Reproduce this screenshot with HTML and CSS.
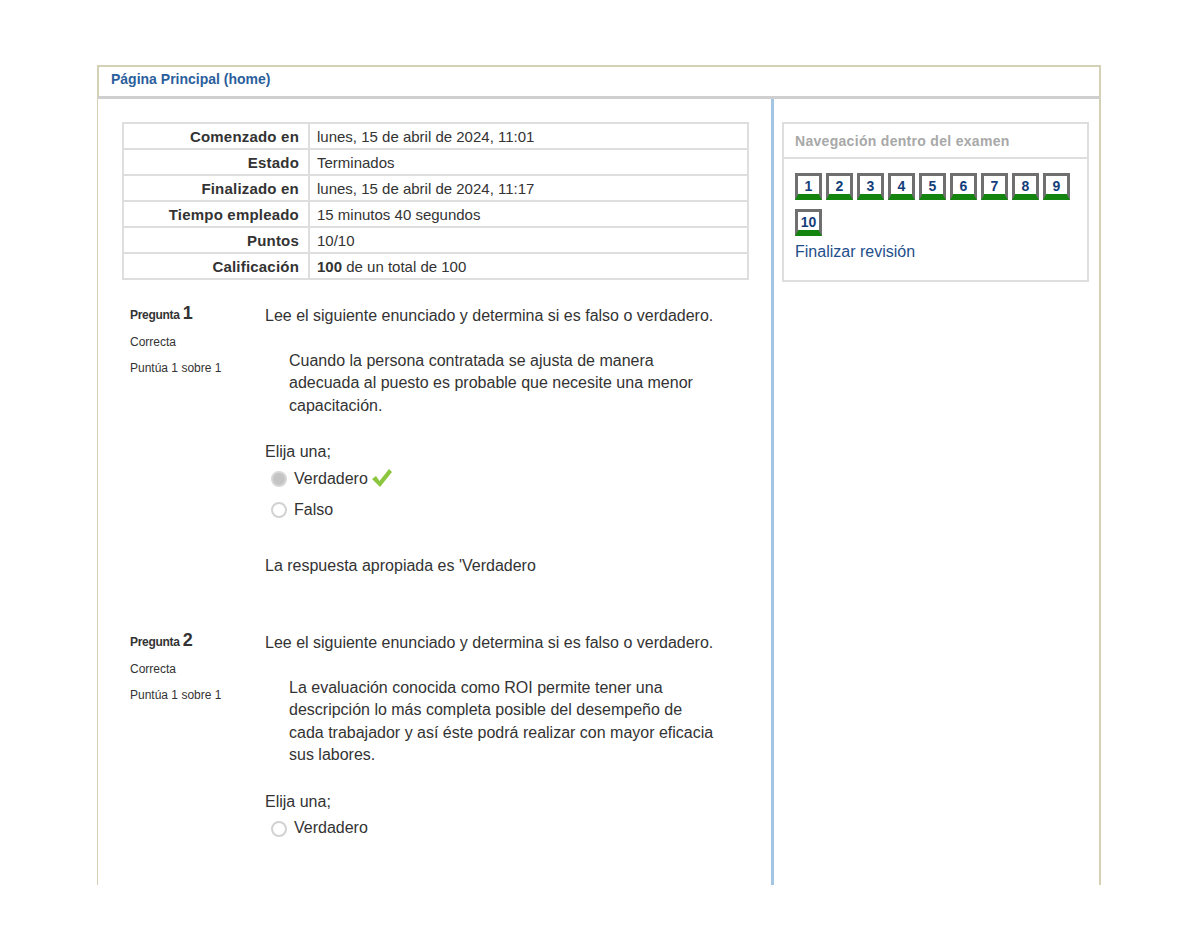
FILE: index.html
```
<html>

<head>
  <link rel="stylesheet" href="styles.css">
</head>

<body>

  <div class="page">
    <div class="navbar">
      <a class="home-link">Página Principal (home)</a>
    </div>

    <div class="main">
      <div class="region-main">

        <table class="summary">
          <tr>
            <th>Comenzado en</th>
            <td>lunes, 15 de abril de 2024, 11:01</td>
          </tr>
          <tr>
            <th>Estado</th>
            <td>Terminados</td>
          </tr>
          <tr>
            <th>Finalizado en</th>
            <td>lunes, 15 de abril de 2024, 11:17</td>
          </tr>
          <tr>
            <th>Tiempo empleado</th>
            <td>15 minutos 40 segundos</td>
          </tr>
          <tr>
            <th>Puntos</th>
            <td>10/10</td>
          </tr>
          <tr>
            <th>Calificación</th>
            <td><b>100</b> de un total de 100</td>
          </tr>
        </table>

        <!-- pregunta 1 -->
        <div class="que">
          <div class="info">
            <p class="qno">Pregunta <span>1</span></p>
            <p class="state">Correcta</p>
            <p class="grade">Puntúa 1 sobre 1</p>
          </div>
          <div class="content">
            <p class="qtext">Lee el siguiente enunciado y determina si es falso o verdadero.</p>
            <p class="statement">Cuando la persona contratada se ajusta de manera adecuada al puesto es probable que necesite una menor capacitación.</p>
            <p class="prompt">Elija una;</p>
            <div class="answer">
              <div class="option">
                <span class="radio checked"></span>
                <span>Verdadero</span>
                <svg class="tick" width="22" height="20" viewBox="0 0 22 20">
                  <path d="M1 11 L5 8 L8.5 13 L18 1 L21 4 L9 19 Z" fill="#8cc63f"/>
                </svg>
              </div>
              <div class="option">
                <span class="radio"></span>
                <span>Falso</span>
              </div>
            </div>
            <p class="feedback">La respuesta apropiada es 'Verdadero</p>
          </div>
        </div>

        <!-- pregunta 2 -->
        <div class="que">
          <div class="info">
            <p class="qno">Pregunta <span>2</span></p>
            <p class="state">Correcta</p>
            <p class="grade">Puntúa 1 sobre 1</p>
          </div>
          <div class="content">
            <p class="qtext">Lee el siguiente enunciado y determina si es falso o verdadero.</p>
            <p class="statement">La evaluación conocida como ROI permite tener una descripción lo más completa posible del desempeño de cada trabajador y así éste podrá realizar con mayor eficacia sus labores.</p>
            <p class="prompt">Elija una;</p>
            <div class="answer">
              <div class="option">
                <span class="radio"></span>
                <span>Verdadero</span>
              </div>
            </div>
          </div>
        </div>

      </div>

      <div class="region-side">
        <div class="block">
          <div class="block-header">Navegación dentro del examen</div>
          <div class="block-content">
            <div class="qnbuttons">
              <a class="qnbutton">1</a>
              <a class="qnbutton">2</a>
              <a class="qnbutton">3</a>
              <a class="qnbutton">4</a>
              <a class="qnbutton">5</a>
              <a class="qnbutton">6</a>
              <a class="qnbutton">7</a>
              <a class="qnbutton">8</a>
              <a class="qnbutton">9</a>
              <a class="qnbutton">10</a>
            </div>
            <a class="finish">Finalizar revisión</a>
          </div>
        </div>
      </div>
    </div>
  </div>

</body>

</html>
```

FILE: styles.css
```
body {
  margin: 0;
  background-color: #FFF;
  font-family: "Liberation Sans", Arial, sans-serif;
  color: #333;
}

p {
  margin: 0;
}

.page {
  margin: 65px 0 0 97px;
  width: 1004px;
}

.navbar {
  height: 25px;
  border-top: 2px solid #d3d0b6;
  border-left: 2px solid #d3d0b6;
  border-right: 2px solid #d3d0b6;
  border-bottom: 3px solid #cfcfcf;
  padding: 4px 0 0 12px;
  box-sizing: content-box;
}

.home-link {
  font-size: 14px;
  font-weight: bold;
  color: #2b5e9c;
}

.main {
  display: flex;
  height: 786px;
  overflow: hidden;
  border-left: 1px solid #d3d0b6;
  border-right: 2px solid #d3d0b6;
}

.region-main {
  flex: none;
  width: 676px;
  border-right: 3px solid #a3c5e3;
  padding: 23px 0 0 24px;
  box-sizing: border-box;
}

.region-side {
  flex: 1;
  padding: 23px 0 0 8px;
}

/* resumen */
.summary {
  width: 627px;
  border-collapse: collapse;
  border: 2px solid #dedede;
  font-size: 15px;
}

.summary th,
.summary td {
  border: 2px solid #dedede;
  height: 26px;
  padding: 0 7px;
  font-weight: normal;
}

.summary th {
  width: 168px;
  padding-right: 9px;
  text-align: right;
  font-weight: bold;
  letter-spacing: 0.2px;
}

.summary td b {
  font-weight: bold;
}

/* preguntas */
.que {
  display: flex;
  margin-top: 23px;
}

.que + .que {
  margin-top: 53px;
}

.info {
  width: 135px;
  padding-left: 8px;
  flex: none;
  font-size: 12px;
}

.qno {
  font-weight: bold;
  font-size: 12px;
  letter-spacing: -0.3px;
}

.qno span {
  font-size: 18px;
}

.state {
  margin-top: 11px;
}

.grade {
  margin-top: 12px;
}

.content {
  width: 470px;
  font-size: 16px;
  line-height: 22.5px;
}

.qtext {
  margin-top: 2px;
}

.statement {
  margin: 22px 0 0 24px;
  width: 430px;
}

.prompt {
  margin-top: 24px;
}

.answer {
  margin-left: 6px;
  margin-top: 0;
}

.option {
  display: flex;
  align-items: center;
  height: 31px;
}

.radio {
  width: 12px;
  height: 12px;
  border: 2px solid #d2d2d2;
  border-radius: 50%;
  margin-right: 7px;
  background-color: #FFF;
}

.radio.checked {
  background-color: #c4c4c4;
  border-color: #d6d6d6;
}

.tick {
  margin-left: 3px;
  margin-top: -2px;
}

.feedback {
  margin-top: 29px;
}

/* navegacion */
.block {
  width: 303px;
  border: 2px solid #dedede;
  height: 156px;
}

.block-header {
  height: 33px;
  border-bottom: 2px solid #dedede;
  padding-left: 11px;
  display: flex;
  align-items: center;
  font-size: 14px;
  font-weight: bold;
  color: #a8a8a8;
  letter-spacing: 0.3px;
}

.block-content {
  padding: 14px 11px 0 11px;
}

.qnbuttons {
  display: flex;
  flex-wrap: wrap;
  gap: 9px 4px;
  width: 290px;
}

.qnbutton {
  display: flex;
  align-items: center;
  justify-content: center;
  box-sizing: border-box;
  min-width: 27px;
  height: 27px;
  padding: 0 1px;
  border: 3px solid #6f6f6f;
  border-bottom: 5px solid #13850f;
  background-color: #FFF;
  font-size: 14px;
  font-weight: bold;
  color: #143e7a;
  box-shadow: inset 0 -1px 0 #13850f;
}

.finish {
  display: block;
  margin-top: 7px;
  font-size: 16px;
  color: #1f4f8a;
}
```
